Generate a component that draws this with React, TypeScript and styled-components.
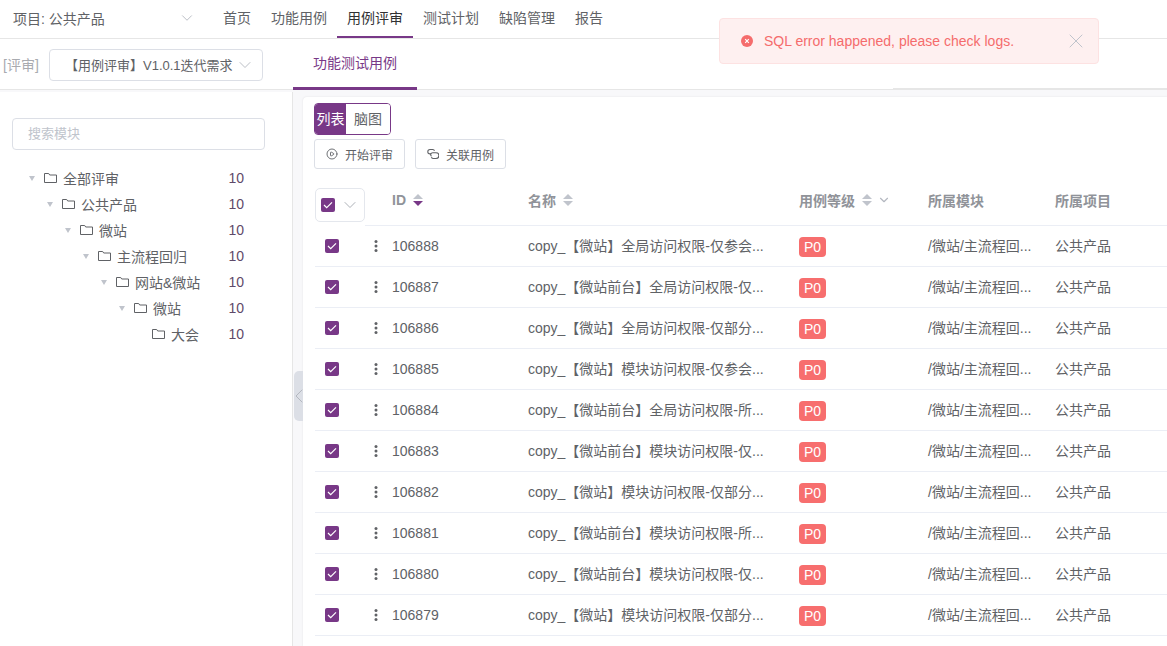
import React from 'react'
import {ChevronDown, ChevronLeft, CirclePlay, X} from 'lucide-react'
import styled, {createGlobalStyle} from 'styled-components'

const PURPLE = '#783887'
const TEXT = '#606266'
const TABLE_COLUMNS = '50px 27px 136px 271px 129px 127px 1fr'

const navItems = ['首页', '功能用例', '用例评审', '测试计划', '缺陷管理', '报告']

const treeNodes = [
  {label: '全部评审', level: 0},
  {label: '公共产品', level: 1},
  {label: '微站', level: 2},
  {label: '主流程回归', level: 3},
  {label: '网站&微站', level: 4},
  {label: '微站', level: 5},
  {label: '大会', level: 6, leaf: true},
]

const cases = [
  {id: 106888, name: 'copy_【微站】全局访问权限-仅参会...'},
  {id: 106887, name: 'copy_【微站前台】全局访问权限-仅...'},
  {id: 106886, name: 'copy_【微站】全局访问权限-仅部分...'},
  {id: 106885, name: 'copy_【微站】模块访问权限-仅参会...'},
  {id: 106884, name: 'copy_【微站前台】全局访问权限-所...'},
  {id: 106883, name: 'copy_【微站前台】模块访问权限-仅...'},
  {id: 106882, name: 'copy_【微站】模块访问权限-仅部分...'},
  {id: 106881, name: 'copy_【微站前台】模块访问权限-所...'},
  {id: 106880, name: 'copy_【微站前台】模块访问权限-仅...'},
  {id: 106879, name: 'copy_【微站】模块访问权限-仅部分...'},
]

const GlobalStyle = createGlobalStyle`
  html, body {
    margin: 0;
    padding: 0;
    background: #fff;
  }

  body {
    font-family: "Liberation Sans", "Noto Sans CJK SC", sans-serif;
    font-size: 14px;
    color: ${TEXT};
  }

  * {
    box-sizing: border-box;
  }
`

const Page = styled.div`
  position: relative;
  display: flex;
  flex-direction: column;
  width: 1167px;
  height: 646px;
  overflow: hidden;
`

const TopBar = styled.header`
  display: flex;
  flex: none;
  height: 39px;
  border-bottom: 1px solid #e6e6e6;
`

const ProjectSelect = styled.div`
  display: flex;
  align-items: center;
  justify-content: space-between;
  width: 213px;
  padding: 0 17px 2px 13px;
  color: ${TEXT};
`

const NavItem = styled.div<{$active?: boolean}>`
  height: 38px;
  padding: 0 10px;
  line-height: 36px;
  border-bottom: 2px solid ${(p) => (p.$active ? PURPLE : 'transparent')};
  color: ${(p) => (p.$active ? '#303133' : TEXT)};
`

const SubBar = styled.div`
  position: relative;
  display: flex;
  flex: none;
  align-items: center;
  height: 51px;
  border-bottom: 1px solid #e6e6e6;

  &::after {
    content: '';
    position: absolute;
    right: 0;
    bottom: -1px;
    width: 274px;
    height: 2px;
    background: #e6e6e6;
  }
`

const ReviewLabel = styled.span`
  width: 49px;
  padding-left: 3px;
  color: #a9abb0;
`

const ReviewSelect = styled.div`
  display: flex;
  align-items: center;
  justify-content: space-between;
  width: 214px;
  height: 32px;
  margin-top: 1px;
  padding: 0 7px 0 15px;
  font-size: 13px;
  border: 1px solid #dcdfe6;
  border-radius: 4px;
  white-space: nowrap;
`

const Tab = styled.div`
  align-self: stretch;
  width: 124px;
  height: 51px;
  margin-left: 30px;
  line-height: 49px;
  text-align: center;
  color: ${PURPLE};
  border-bottom: 3px solid ${PURPLE};
`

const Body = styled.div`
  position: relative;
  display: flex;
  flex: 1;
  min-height: 0;
  padding-top: 2px;
  background: #f8f8fa;
`

const Aside = styled.aside`
  flex: none;
  width: 293px;
  padding: 26px 27px 0 12px;
  background: #fff;
  border-right: 1px solid #e6e6e6;
`

const SearchBox = styled.div`
  height: 32px;
  padding-left: 15px;
  margin-bottom: 15px;
  line-height: 30px;
  font-size: 13px;
  color: #c0c4cc;
  border: 1px solid #dcdfe6;
  border-radius: 4px;
`

const TreeRow = styled.div<{$level: number}>`
  display: flex;
  align-items: center;
  height: 26px;
  margin-right: -6px;
  padding-left: ${(p) => 17 + p.$level * 18}px;
  padding-right: 27px;
`

const TreeCaret = styled.span<{$hidden?: boolean}>`
  flex: none;
  width: 0;
  height: 0;
  margin-right: 9px;
  border-style: solid;
  border-width: 5px 3.5px 0;
  border-color: #c0c4cc transparent transparent;
  visibility: ${(p) => (p.$hidden ? 'hidden' : 'visible')};
`

const TreeLabel = styled.span`
  flex: 1;
  margin-left: 6px;
`

const TreeCount = styled.span`
  color: #5f4a69;
`

const Splitter = styled.div`
  position: absolute;
  top: 281px;
  left: 294px;
  display: flex;
  align-items: center;
  justify-content: center;
  width: 9px;
  height: 50px;
  background: #dcdfe6;
  border-radius: 5px 0 0 5px;
  color: #b4b8c0;

  svg {
    flex: none;
  }
`

const Panel = styled.main`
  flex: 1;
  min-width: 0;
  margin: 5px 0 0 10px;
  padding: 6px 0 0 11px;
  background: #fff;
  border-radius: 4px 0 0 0;
  box-shadow: 0 0 2px rgba(0, 0, 0, 0.1);
`

const Segments = styled.div`
  display: inline-flex;
  height: 32px;
  margin-bottom: 4px;
  border: 1px solid ${PURPLE};
  border-radius: 4px;
  overflow: hidden;
  vertical-align: top;
`

const Segment = styled.div<{$active?: boolean}>`
  width: ${(p) => (p.$active ? 31 : 44)}px;
  line-height: 30px;
  text-align: center;
  background: ${(p) => (p.$active ? PURPLE : '#fff')};
  color: ${(p) => (p.$active ? '#fff' : TEXT)};
`

const Actions = styled.div`
  display: flex;
  gap: 10px;
`

const ActionButton = styled.div`
  display: flex;
  align-items: center;
  gap: 7px;
  height: 30px;
  padding: 0 11px 0 11px;
  font-size: 12px;
  border: 1px solid #dcdfe6;
  border-radius: 3px;
`

const Table = styled.div`
  margin: 11px 0 0 1px;
`

const HeaderRow = styled.div`
  display: grid;
  grid-template-columns: ${TABLE_COLUMNS};
  height: 46px;
  font-weight: 700;
  color: #909399;
`

const HeaderCell = styled.div`
  display: flex;
  align-items: center;
  height: 46px;
  padding-bottom: 5px;
  border-bottom: 1px solid #ebeef5;
  white-space: nowrap;
`

const SelectAll = styled.div`
  display: flex;
  align-items: center;
  justify-content: space-between;
  width: 50px;
  height: 34px;
  margin-top: 8px;
  padding: 0 4px 0 5px;
  border: 1px solid #e4e7ed;
  border-radius: 5px;
  color: #a4a8b0;
`

const Row = styled.div`
  display: grid;
  grid-template-columns: ${TABLE_COLUMNS};
  align-items: center;
  height: 41px;
  line-height: 20px;
  border-bottom: 1px solid #ebeef5;
`

const CheckCell = styled.div`
  padding-left: 10px;
`

const CheckBox = styled.span`
  display: flex;
  align-items: center;
  justify-content: center;
  width: 14px;
  height: 14px;
  background: ${PURPLE};
  border-radius: 2px;
`

const KebabCell = styled.div`
  display: flex;
  padding-left: 9px;
`

const Cell = styled.div`
  white-space: nowrap;
`

const Badge = styled.span`
  display: inline-block;
  width: 27px;
  height: 20px;
  line-height: 20px;
  text-align: center;
  color: #fff;
  background: #f76e6e;
  border-radius: 4px;
  vertical-align: middle;
`

const SortWrap = styled.span`
  display: inline-flex;
  flex-direction: column;
  gap: 2px;
  margin-left: 7px;
`

const SortCaret = styled.i<{$down?: boolean; $on?: boolean}>`
  display: block;
  width: 0;
  height: 0;
  border-style: solid;
  border-color: transparent;
  border-width: ${(p) => (p.$down ? '5px 5px 0' : '0 5px 5px')};
  ${(p) => (p.$down ? 'border-top-color' : 'border-bottom-color')}: ${(p) =>
    p.$on ? PURPLE : '#c0c4cc'};
`

const LevelChevron = styled(ChevronDown)`
  margin-left: 5px;
  color: #b4b8c0;
`

const Toast = styled.div`
  position: absolute;
  top: 18px;
  left: 719px;
  display: flex;
  align-items: center;
  width: 380px;
  height: 46px;
  padding: 0 10px 0 21px;
  color: #f56c6c;
  background: #fef0f0;
  border: 1px solid #fde2e2;
  border-radius: 4px;
`

const ToastText = styled.span`
  flex: 1;
  margin-left: 11px;
`

const FolderIcon = () => (
  <svg width="13" height="12" viewBox="0 0 13 12" fill="none" stroke="#606266" strokeWidth="1">
    <path d="M.5 1.5h4.2l1 1.5h6.8v7.500H.5z" />
  </svg>
)

const LinkIcon = () => (
  <svg width="12" height="12" viewBox="0 0 12 12" fill="none" stroke="#606266" strokeWidth="1.1">
    <path d="M7.500 2.800A2 2 0 0 0 5.800 1.500H3a2.100 2.100 0 0 0 0 4.400h1" />
    <path d="M4.500 8.300A2 2 0 0 1 5.800 4.700H9a2.900 2.900 0 0 1 0 5.800H6a2 2 0 0 1-1.700-1.200" />
  </svg>
)

const CheckMark = () => (
  <svg width="10" height="8" viewBox="0 0 10 8" fill="none" stroke="#fff" strokeWidth="1.2">
    <path d="M1 4l2.700 2.700L9 1.300" />
  </svg>
)

const ErrorIcon = () => (
  <svg width="12" height="12" viewBox="0 0 12 12">
    <circle cx="6" cy="6" r="6" fill="#f56c6c" />
    <path d="M4.200 4.200l3.600 3.600M7.800 4.200l-3.600 3.600" stroke="#fff" strokeWidth="1.2" />
  </svg>
)

const KebabIcon = () => (
  <svg width="4" height="14" viewBox="0 0 4 14" fill="#606266">
    <circle cx="2" cy="2.500" r="1.500" />
    <circle cx="2" cy="7" r="1.500" />
    <circle cx="2" cy="11.500" r="1.500" />
  </svg>
)

const Sort: React.FC<{active?: boolean}> = ({active}) => (
  <SortWrap>
    <SortCaret />
    <SortCaret $down $on={active} />
  </SortWrap>
)

export default function App() {
  return (
    <Page>
      <GlobalStyle />
      <TopBar>
        <ProjectSelect>
          项目: 公共产品
          <ChevronDown size={18} strokeWidth={1.2} color="#b4b8c0" />
        </ProjectSelect>
        {navItems.map((item) => (
          <NavItem key={item} $active={item === '用例评审'}>
            {item}
          </NavItem>
        ))}
      </TopBar>

      <SubBar>
        <ReviewLabel>[评审]</ReviewLabel>
        <ReviewSelect>
          【用例评审】V1.0.1迭代需求
          <ChevronDown size={20} strokeWidth={1.1} color="#b4b8c0" />
        </ReviewSelect>
        <Tab>功能测试用例</Tab>
      </SubBar>

      <Body>
        <Aside>
          <SearchBox>搜索模块</SearchBox>
          {treeNodes.map((node) => (
            <TreeRow key={node.level} $level={node.level}>
              <TreeCaret $hidden={node.leaf} />
              <FolderIcon />
              <TreeLabel>{node.label}</TreeLabel>
              <TreeCount>10</TreeCount>
            </TreeRow>
          ))}
        </Aside>

        <Splitter>
          <ChevronLeft size={24} strokeWidth={1} />
        </Splitter>

        <Panel>
          <Segments>
            <Segment $active>列表</Segment>
            <Segment>脑图</Segment>
          </Segments>
          <Actions>
            <ActionButton>
              <CirclePlay size={12} strokeWidth={1.8} />
              开始评审
            </ActionButton>
            <ActionButton>
              <LinkIcon />
              关联用例
            </ActionButton>
          </Actions>

          <Table>
            <HeaderRow>
              <div>
                <SelectAll>
                  <CheckBox>
                    <CheckMark />
                  </CheckBox>
                  <ChevronDown size={20} strokeWidth={1.1} />
                </SelectAll>
              </div>
              <HeaderCell />
              <HeaderCell>
                ID
                <Sort active />
              </HeaderCell>
              <HeaderCell>
                名称
                <Sort />
              </HeaderCell>
              <HeaderCell>
                用例等级
                <Sort />
                <LevelChevron size={14} />
              </HeaderCell>
              <HeaderCell>所属模块</HeaderCell>
              <HeaderCell>所属项目</HeaderCell>
            </HeaderRow>

            {cases.map((item) => (
              <Row key={item.id}>
                <CheckCell>
                  <CheckBox>
                    <CheckMark />
                  </CheckBox>
                </CheckCell>
                <KebabCell>
                  <KebabIcon />
                </KebabCell>
                <Cell>{item.id}</Cell>
                <Cell>{item.name}</Cell>
                <Cell>
                  <Badge>P0</Badge>
                </Cell>
                <Cell>/微站/主流程回...</Cell>
                <Cell>公共产品</Cell>
              </Row>
            ))}
          </Table>
        </Panel>
      </Body>

      <Toast>
        <ErrorIcon />
        <ToastText>SQL error happened, please check logs.</ToastText>
        <X size={24} strokeWidth={1} color="#c0c4cc" />
      </Toast>
    </Page>
  )
}
